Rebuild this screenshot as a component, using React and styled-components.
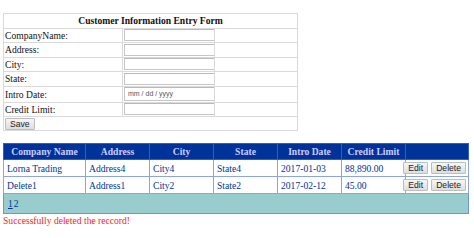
import React, { useState } from "react";
import styled, { createGlobalStyle } from "styled-components";

const GlobalStyle = createGlobalStyle`
  body {
    margin: 0;
    background: #ffffff;
    font-family: "Liberation Serif", "Times New Roman", serif;
  }
  table, th, td {
    font-family: "Liberation Serif", "Times New Roman", serif;
  }
`;

const Page = styled.div`
  padding: 13px 7px 0 3px;
  display: flex;
  flex-direction: column;
  align-items: flex-start;
`;

const FormTable = styled.table`
  border-collapse: collapse;
  table-layout: fixed;
  width: 294px;
  font-size: 9.6px;
  color: #111;
  border: 1px solid #d4d4d4;
  border-bottom-color: #e6c9cc;
`;

const FormCell = styled.td`
  border: 1px solid #dadada;
  padding: 0 1px;
  height: ${(p) => p.h || 13.5}px;
  text-align: ${(p) => (p.center ? "center" : "left")};
  font-weight: ${(p) => (p.bold ? 700 : 400)};
  font-size: 9.6px;
  vertical-align: middle;
  line-height: 11px;
`;

const TextBox = styled.input`
  display: block;
  box-sizing: border-box;
  width: 91px;
  height: ${(p) => (p.tall ? 14 : 12)}px;
  margin: 0;
  padding: 0 3px;
  border: 1px solid #c6c6c6;
  border-top-color: #b9b9b9;
  background: #fff;
  font-family: "Liberation Sans", Arial, sans-serif;
  font-size: 7px;
  color: #555;
  outline: none;
`;

const DateText = styled.span`
  line-height: 12px;
`;

const Button = styled.button`
  box-sizing: border-box;
  height: 12px;
  padding: 0 4px;
  border: 1px solid #bdbdbd;
  border-radius: 1px;
  background: linear-gradient(#f6f6f6, #dedede);
  font-family: "Liberation Sans", Arial, sans-serif;
  font-size: 8.6px;
  line-height: 10px;
  color: #222;
  cursor: pointer;
`;

const GridTable = styled.table`
  margin-top: 12px;
  border-collapse: collapse;
  table-layout: fixed;
  width: 465px;
  font-size: 9.6px;
  border: 1px solid #3366cc;
  background: #fff;
`;

const HeadCell = styled.th`
  background: #003399;
  color: #ccccff;
  font-weight: 700;
  font-size: 9.6px;
  height: 15px;
  padding: 0 3px;
  border: 1px solid #2f5fc4;
  text-align: center;
  line-height: 11px;
`;

const Cell = styled.td`
  color: #003399;
  font-size: 9.6px;
  height: 16px;
  padding: 0 3px;
  border: 1px solid #8da4e2;
  line-height: 11px;
  white-space: nowrap;
`;

const ActionCell = styled(Cell)`
  padding: 0 2px;
  text-align: right;
`;

const Actions = styled.div`
  display: flex;
  gap: 3px;
  justify-content: flex-end;
`;

const PagerCell = styled.td`
  background: #99cccc;
  color: #003399;
  font-size: 9.6px;
  height: 19px;
  padding: 0 4px;
  border: 1px solid #6f93d6;
  text-align: left;
  line-height: 11px;
`;

const PageLink = styled.span`
  text-decoration: ${(p) => (p.current ? "underline" : "none")};
  margin-right: 1px;
`;

const Message = styled.div`
  margin-top: 1px;
  color: #ff2020;
  font-size: 9.6px;
  line-height: 11px;
`;

const fields = [
  { label: "CompanyName:" },
  { label: "Address:" },
  { label: "City:" },
  { label: "State:" },
  { label: "Intro Date:", type: "date" },
  { label: "Credit Limit:" },
];

const rows = [
  { name: "Lorna Trading", address: "Address4", city: "City4", state: "State4", date: "2017-01-03", credit: "88,890.00" },
  { name: "Delete1", address: "Address1", city: "City2", state: "State2", date: "2017-02-12", credit: "45.00" },
];

const colWidths = [82, 64, 64, 64, 64, 64, 63];

export default function App() {
  const [page] = useState(1);

  return (
    <Page>
      <GlobalStyle />
      <FormTable>
        <colgroup>
          <col style={{ width: 119 }} />
          <col style={{ width: 92 }} />
          <col style={{ width: 83 }} />
        </colgroup>
        <tbody>
          <tr>
            <FormCell colSpan={3} center bold>
              Customer Information Entry Form
            </FormCell>
          </tr>
          {fields.map((f) => (
            <tr key={f.label}>
              <FormCell h={f.type === "date" ? 15 : 13.5}>{f.label}</FormCell>
              <FormCell>
                {f.type === "date" ? (
                  <TextBox tall as="div">
                    <DateText>mm / dd / yyyy</DateText>
                  </TextBox>
                ) : (
                  <TextBox type="text" />
                )}
              </FormCell>
              <FormCell />
            </tr>
          ))}
          <tr>
            <FormCell colSpan={3} h={13}>
              <Button>Save</Button>
            </FormCell>
          </tr>
        </tbody>
      </FormTable>

      <GridTable>
        <colgroup>
          {colWidths.map((w, i) => (
            <col key={i} style={{ width: w }} />
          ))}
        </colgroup>
        <thead>
          <tr>
            <HeadCell>Company Name</HeadCell>
            <HeadCell>Address</HeadCell>
            <HeadCell>City</HeadCell>
            <HeadCell>State</HeadCell>
            <HeadCell>Intro Date</HeadCell>
            <HeadCell>Credit Limit</HeadCell>
            <HeadCell />
          </tr>
        </thead>
        <tbody>
          {rows.map((r) => (
            <tr key={r.name}>
              <Cell>{r.name}</Cell>
              <Cell>{r.address}</Cell>
              <Cell>{r.city}</Cell>
              <Cell>{r.state}</Cell>
              <Cell>{r.date}</Cell>
              <Cell>{r.credit}</Cell>
              <ActionCell>
                <Actions>
                  <Button>Edit</Button>
                  <Button>Delete</Button>
                </Actions>
              </ActionCell>
            </tr>
          ))}
          <tr>
            <PagerCell colSpan={7}>
              <PageLink current={page === 1}>1</PageLink>
              <PageLink current={page === 2}>2</PageLink>
            </PagerCell>
          </tr>
        </tbody>
      </GridTable>
      <Message>Successfully deleted the reccord!</Message>
    </Page>
  );
}
